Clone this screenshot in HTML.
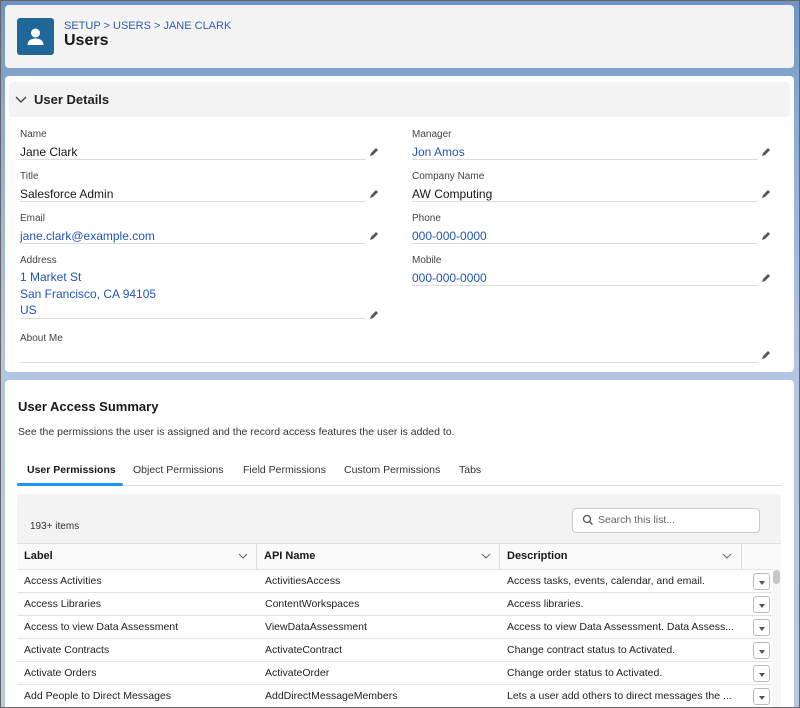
<!DOCTYPE html>
<html style="overflow:hidden;width:800px;height:708px"><head><meta charset="utf-8"><style>
*{box-sizing:border-box;margin:0;padding:0}
body{width:800px;height:708px;overflow:hidden;font-family:"Liberation Sans",sans-serif;color:#181818;position:relative;background:linear-gradient(#6f93c2 0,#8fabd2 120px,#b3c5e0 360px,#b8c9e2 708px)}
.frame{position:absolute;left:0;top:0;width:800px;height:708px;border:1px solid #666;pointer-events:none;z-index:9}
.abs{position:absolute;white-space:nowrap}
.card{position:absolute;background:#fff;border-radius:4px}
.lbl{position:absolute;font-size:10px;color:#444}
.val{position:absolute;font-size:12px;color:#181818}
.link{color:#2156b8}
.line{position:absolute;height:1px;background:#dcdcdc}
.pen{position:absolute;width:12px;height:12px}
.th{position:absolute;top:543px;height:27px;font-size:11px;font-weight:bold;line-height:27px;padding-left:7px;border-right:1px solid #ddd}
.row{position:absolute;left:17px;width:755px;height:23px;border-top:1px solid #e3e3e3;font-size:10.5px;line-height:22px;color:#222;background:#fff}
.row span{position:absolute;top:0}
.dd{position:absolute;left:736px;top:3px;width:17px;height:17px;border:1px solid #bbb;border-radius:3px;background:#fff}
.dd:after{content:"";position:absolute;left:5px;top:7px;border-left:3px solid transparent;border-right:3px solid transparent;border-top:4px solid #555}
</style></head><body>
<div class="frame"></div>
<div class="card" style="left:5px;top:5px;width:789px;height:63px;background:#f3f3f3"></div>
<div class="abs" style="left:17px;top:18px;width:37px;height:37px;background:#1f6699;border-radius:3px">
<svg width="37" height="37" viewBox="0 0 37 37"><circle cx="18.5" cy="15" r="4.5" fill="#fff"/><path d="M10.5 27c0-4 3-6.5 8-6.5s8 2.5 8 6.5z" fill="#fff"/></svg></div>
<div class="abs" style="left:64px;top:20px;font-size:11px;color:#2e5fa8">SETUP &gt; USERS &gt; JANE CLARK</div>
<div class="abs" style="left:64px;top:32px;font-size:16px;font-weight:bold">Users</div>

<div class="card" style="left:5px;top:76px;width:789px;height:296px"></div>
<div class="abs" style="left:9px;top:82px;width:781px;height:35px;background:#f3f3f3;border-radius:4px"></div>
<svg class="abs" style="left:15px;top:95px" width="12" height="10"><path d="M1 2l5 5 5-5" stroke="#444" stroke-width="1.4" fill="none"/></svg>
<div class="abs" style="left:34px;top:92px;font-size:13px;font-weight:bold;color:#222">User Details</div>

<div class="lbl" style="left:20px;top:129px">Name</div><div class="val" style="left:20px;top:145px">Jane Clark</div><div class="line" style="left:20px;top:159px;width:346px"></div>
<div class="lbl" style="left:20px;top:171px">Title</div><div class="val" style="left:20px;top:187px">Salesforce Admin</div><div class="line" style="left:20px;top:201px;width:346px"></div>
<div class="lbl" style="left:20px;top:213px">Email</div><div class="val link" style="left:20px;top:229px">jane.clark@example.com</div><div class="line" style="left:20px;top:243px;width:346px"></div>
<div class="lbl" style="left:20px;top:255px">Address</div><div class="val link" style="left:20px;top:269px;line-height:16.5px">1 Market St<br>San Francisco, CA 94105<br>US</div><div class="line" style="left:20px;top:318px;width:346px"></div>
<div class="lbl" style="left:20px;top:333px">About Me</div><div class="line" style="left:20px;top:362px;width:738px"></div>

<div class="lbl" style="left:412px;top:129px">Manager</div><div class="val link" style="left:412px;top:145px">Jon Amos</div><div class="line" style="left:412px;top:159px;width:346px"></div>
<div class="lbl" style="left:412px;top:171px">Company Name</div><div class="val" style="left:412px;top:187px">AW Computing</div><div class="line" style="left:412px;top:201px;width:346px"></div>
<div class="lbl" style="left:412px;top:213px">Phone</div><div class="val link" style="left:412px;top:229px">000-000-0000</div><div class="line" style="left:412px;top:243px;width:346px"></div>
<div class="lbl" style="left:412px;top:255px">Mobile</div><div class="val link" style="left:412px;top:271px">000-000-0000</div><div class="line" style="left:412px;top:285px;width:346px"></div>

<svg width="0" height="0" style="position:absolute"><defs><symbol id="p" viewBox="0 0 12 12"><path d="M2 10l1-3 5-5 2 2-5 5z M1.5 10.5l1-0.5" fill="#555"/></symbol></defs></svg>
<svg class="pen" style="left:368px;top:146px"><use href="#p"/></svg>
<svg class="pen" style="left:368px;top:188px"><use href="#p"/></svg>
<svg class="pen" style="left:368px;top:230px"><use href="#p"/></svg>
<svg class="pen" style="left:368px;top:309px"><use href="#p"/></svg>
<svg class="pen" style="left:760px;top:146px"><use href="#p"/></svg>
<svg class="pen" style="left:760px;top:188px"><use href="#p"/></svg>
<svg class="pen" style="left:760px;top:230px"><use href="#p"/></svg>
<svg class="pen" style="left:760px;top:272px"><use href="#p"/></svg>
<svg class="pen" style="left:760px;top:349px"><use href="#p"/></svg>

<div class="card" style="left:5px;top:380px;width:789px;height:328px;border-radius:4px 4px 0 0"></div>
<div class="abs" style="left:18px;top:399px;font-size:13px;font-weight:bold">User Access Summary</div>
<div class="abs" style="left:18px;top:426px;font-size:10.5px;color:#333">See the permissions the user is assigned and the record access features the user is added to.</div>
<div class="abs" style="left:27px;top:464px;font-size:10.5px;font-weight:bold">User Permissions</div>
<div class="abs" style="left:133px;top:464px;font-size:10.5px;color:#333">Object Permissions</div>
<div class="abs" style="left:243px;top:464px;font-size:10.5px;color:#333">Field Permissions</div>
<div class="abs" style="left:344px;top:464px;font-size:10.5px;color:#333">Custom Permissions</div>
<div class="abs" style="left:459px;top:464px;font-size:10.5px;color:#333">Tabs</div>
<div class="line" style="left:17px;top:485px;width:764px"></div>
<div class="abs" style="left:17px;top:483px;width:106px;height:3px;background:#1b96ff;border-radius:2px"></div>

<div class="abs" style="left:17px;top:494px;width:764px;height:214px;background:#f3f3f3;border-radius:4px 4px 0 0"></div>
<div class="abs" style="left:30px;top:521px;font-size:10px;color:#333">193+ items</div>
<div class="abs" style="left:572px;top:508px;width:188px;height:25px;background:#fff;border:1px solid #c9c9c9;border-radius:4px"></div>
<svg class="abs" style="left:582px;top:514px" width="12" height="12"><circle cx="5" cy="5" r="3.5" stroke="#555" stroke-width="1.3" fill="none"/><path d="M7.5 7.5l3 3" stroke="#555" stroke-width="1.4"/></svg>
<div class="abs" style="left:598px;top:514px;font-size:10.5px;color:#666">Search this list...</div>

<div class="abs" style="left:17px;top:543px;width:764px;height:27px;background:#fafafa;border-top:1px solid #ddd;border-bottom:1px solid #ddd"></div>
<div class="th" style="left:17px;width:240px">Label</div>
<div class="th" style="left:257px;width:243px">API Name</div>
<div class="th" style="left:500px;width:242px">Description</div>
<svg class="abs" style="left:238px;top:552px" width="10" height="8"><path d="M1 2l4 4 4-4" stroke="#666" fill="none"/></svg>
<svg class="abs" style="left:481px;top:552px" width="10" height="8"><path d="M1 2l4 4 4-4" stroke="#666" fill="none"/></svg>
<svg class="abs" style="left:722px;top:552px" width="10" height="8"><path d="M1 2l4 4 4-4" stroke="#666" fill="none"/></svg>

<div class="row" style="top:569px"><span style="left:7px">Access Activities</span><span style="left:248px">ActivitiesAccess</span><span style="left:490px">Access tasks, events, calendar, and email.</span><div class="dd"></div></div>
<div class="row" style="top:592px"><span style="left:7px">Access Libraries</span><span style="left:248px">ContentWorkspaces</span><span style="left:490px">Access libraries.</span><div class="dd"></div></div>
<div class="row" style="top:615px"><span style="left:7px">Access to view Data Assessment</span><span style="left:248px">ViewDataAssessment</span><span style="left:490px">Access to view Data Assessment. Data Assess...</span><div class="dd"></div></div>
<div class="row" style="top:638px"><span style="left:7px">Activate Contracts</span><span style="left:248px">ActivateContract</span><span style="left:490px">Change contract status to Activated.</span><div class="dd"></div></div>
<div class="row" style="top:661px"><span style="left:7px">Activate Orders</span><span style="left:248px">ActivateOrder</span><span style="left:490px">Change order status to Activated.</span><div class="dd"></div></div>
<div class="row" style="top:684px;height:24px"><span style="left:7px">Add People to Direct Messages</span><span style="left:248px">AddDirectMessageMembers</span><span style="left:490px">Lets a user add others to direct messages the ...</span><div class="dd"></div></div>
<div class="abs" style="left:772px;top:569px;width:9px;height:139px;background:#f7f7f7"></div>
<div class="abs" style="left:773px;top:570px;width:7px;height:14px;background:#c7c7c7;border-radius:4px"></div>
</body></html>
